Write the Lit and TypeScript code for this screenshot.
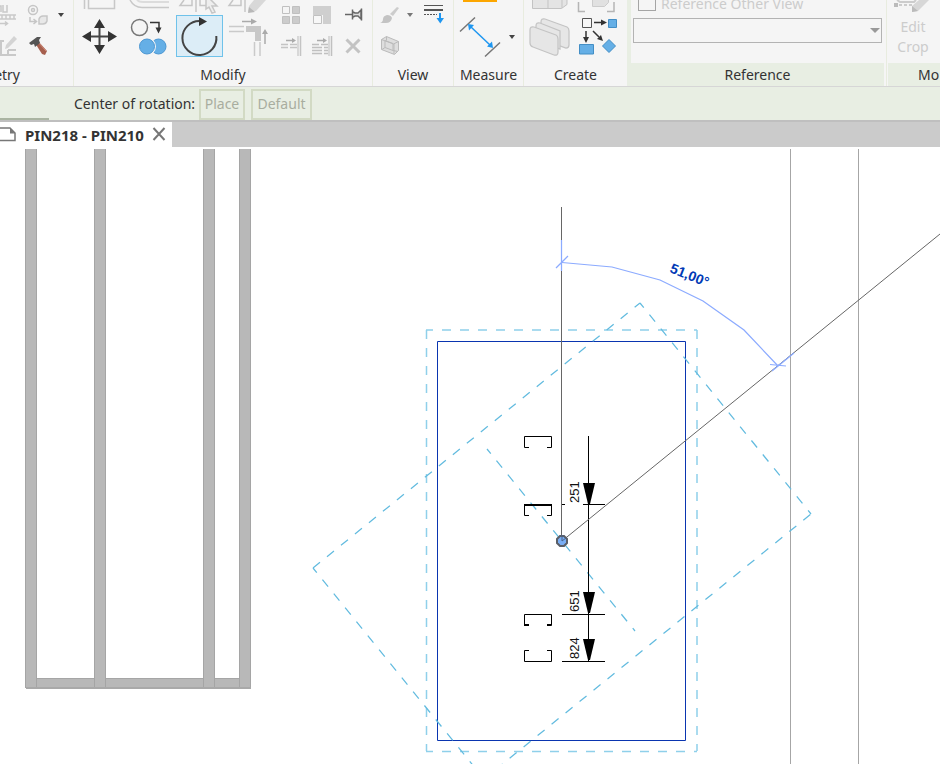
import { LitElement, html, svg, css } from "lit";
import type { SVGTemplateResult } from "lit";
import { customElement } from "lit/decorators.js";

type Box = [number, number, number, number];

const tool = (label: string, box: Box, art: SVGTemplateResult, cls = "") => html`
  <button class="tool ${cls}" aria-label=${label} title=${label}>
    <svg viewBox=${box.join(" ")} width=${box[2]} height=${box[3]} aria-hidden="true">${art}</svg>
  </button>`;

const caret = (x: number, y: number) => svg`<path d="M${x} ${y}h6l-3 4z" fill="#444"/>`;

@customElement("app-root")
export class AppRoot extends LitElement {
  static styles = css`
    :host {
      display: flex;
      flex-direction: column;
      height: 100vh;
      overflow: hidden;
      background: #fff;
      color: #333;
      font: 14px/20px "Noto Sans", sans-serif;
    }
    * { box-sizing: border-box; }
    svg { display: block; }
    .ribbon {
      display: flex;
      flex: none;
      height: 87px;
      overflow: hidden;
      background: #f5f5f5;
      border-bottom: 1px solid #d6d6d6;
    }
    .panel {
      flex: none;
      display: flex;
      flex-direction: column;
      border-right: 1px solid #e8ecdf;
    }
    .body { display: flex; flex: none; height: 63px; overflow: hidden; }
    .title {
      margin: 0;
      height: 23px;
      line-height: 23px;
      text-align: center;
      font-size: 14px;
      font-weight: 400;
      white-space: nowrap;
    }
    .geometry { width: 74px; }
    .geometry .title { width: 20px; direction: rtl; }
    .modify { width: 299px; }
    .view { width: 81px; padding-left: 4px; }
    .view .title { margin-left: -4px; }
    .measure { width: 70px; }
    .create { width: 103px; border-right: 0; }
    .context { border-left: 4px solid #e8eee3; }
    .reference { width: 260px; padding-right: 2px; }
    .reference .body { flex-direction: column; padding: 0 2px; }
    .green { background: #e8eee3; }
    .crop { flex: 1 0 54px; width: 54px; padding-left: 1px; overflow: hidden; border: 0; }
    .crop .title { text-align: left; padding-left: 30px; }
    .grid { display: grid; align-content: start; flex: none; }
    .g-geo { grid-template-columns: 24px 28px 18px; grid-template-rows: 30px 30px; }
    .g-mod { grid-template-columns: 52px 50px 47px 49px; grid-template-rows: 15px 42px; }
    .g-small { grid-template-columns: 32px 32px 32px; grid-template-rows: 30px 30px; padding-left: 3px; }
    .g-view { grid-template-columns: 26px 14px 32px; grid-template-rows: 30px 30px; }
    .g-meas { grid-template-columns: 50px 16px; grid-template-rows: 15px 44px; }
    .g-meas .wide { grid-column: 1 / 3; }
    .g-create { grid-template-columns: 51px 48px; grid-template-rows: 15px 44px; }
    button {
      appearance: none;
      border: 0;
      margin: 0;
      padding: 0;
      background: none;
      color: inherit;
      font: inherit;
    }
    .tool { display: block; overflow: hidden; }
    .active { background: #dcedf7; box-shadow: inset 0 0 0 1px #6fc2ea; }
    .check {
      display: flex;
      flex: none;
      align-items: flex-start;
      gap: 5px;
      margin: -7px 0 0 5px;
      height: 25px;
      color: #ccc;
      white-space: nowrap;
    }
    .check input {
      appearance: none;
      width: 18px;
      height: 18px;
      margin: 0;
      border: 1px solid #a5a5a5;
    }
    .check span { height: 24px; line-height: 22px; }
    .combo { position: relative; flex: none; }
    .combo select {
      appearance: none;
      display: block;
      width: 100%;
      height: 25px;
      border: 1px solid #b3b3b3;
      border-radius: 0;
      background: #f5f5f5;
      opacity: 1;
    }
    .combo svg { position: absolute; right: 2px; top: 10px; pointer-events: none; }
    .edit { display: block; height: 56px; color: #ccc; text-align: center; width: 50px; }
    .edit span { display: block; }
    .options {
      display: flex;
      flex: none;
      align-items: center;
      height: 35px;
      padding-top: 1px;
      background: #e8eee3;
      border-bottom: 2px solid #bfbfbf;
    }
    .field {
      width: 49px;
      height: 32px;
      margin-right: 25px;
      padding: 0;
      border: 0;
      border-bottom: 2px solid #aab4a2;
      border-radius: 0;
      background: none;
    }
    .caption { width: 125px; white-space: nowrap; }
    .choice {
      height: 31px;
      margin-right: 6px;
      border: 2px solid #d2dac4;
      color: #a8ad9f;
      text-align: center;
    }
    .place { width: 46px; }
    .default { width: 61px; }
    .tabs { display: flex; flex: none; height: 25px; background: #cbcbcb; }
    .tab {
      display: flex;
      align-items: center;
      width: 172px;
      background: #fff;
      font-size: 15px;
      font-weight: 700;
      white-space: nowrap;
    }
    .name { width: 126px; padding-left: 7px; font: inherit; color: #333; text-decoration: none; }
    .sheet { flex: 1; min-height: 0; overflow: hidden; }
    .sheet svg { width: 100%; height: 100%; }
    .dim { font: 13px "Liberation Sans", sans-serif; fill: #111; }
    .angle { font: bold 14px "Liberation Sans", sans-serif; fill: #0039b5; }
  `;

  private geometry() {
    return html`<section class="panel geometry">
      <div class="body"><div class="grid g-geo">
        ${tool("Cope", [0, 0, 24, 30], svg`<g fill="none" stroke="#c9c9c9" stroke-width="1.5">
          <path d="M0 6h1v6M3 5v7h4V5M0 15h16M0 19h16M2 15v4M6 15v4M10 15v4M14 15v4"/><path d="M0 23.500h7M5 21.500l2.500 2-2.500 2"/></g>`)}
        ${tool("Join geometry", [24, 0, 28, 30], svg`<g fill="none" stroke="#c6c6c6" stroke-width="1.500">
          <circle cx="33" cy="10" r="4.500"/><circle cx="33" cy="10" r="1.500"/><path d="M30 17v4.500h6M33.500 19l3 2.500-3 2.500"/>
          <path d="M39 24v-5q1-3 4-3h4v5q-1 3-4 3z" fill="#e8e8e8"/></g>`)}
        ${tool("Join options", [52, 0, 18, 30], caret(58, 13))}
        ${tool("Split face", [0, 30, 24, 30], svg`<path d="M5 49l1-4 8-9 3 3-9 9z" fill="#d4d4d4"/><path d="M0 41h4M1 41v14M0 55h16M8 50h8M8 50v5" fill="none" stroke="#c9c9c9" stroke-width="2"/>`)}
        ${tool("Demolish", [24, 30, 28, 30], svg`<path d="M35 43l3-2 9 10-2 4-3-1z" fill="#a65f4e"/><path d="M38 42l8 9" stroke="#d18b79"/><path d="M29 43l8-6h4l-2 3 1 3-5 4-1-3-3 1z" fill="#555"/>`)}
      </div></div>
      <h2 class="title">etry</h2>
    </section>`;
  }

  private modify() {
    return html`<section class="panel modify">
      <div class="body">
        <div class="grid g-mod">
          ${tool("Align", [74, 0, 52, 15], svg`<path d="M84.500 0v9M88.500 0v8.500h26V0" fill="none" stroke="#c8c8c8" stroke-width="1.500"/>`)}
          ${tool("Offset", [126, 0, 50, 15], svg`<path d="M130 0q4 7.500 12 7.500h27" fill="none" stroke="#c8c8c8" stroke-width="1.500"/><path d="M137 0q2 2 6 2h26" fill="none" stroke="#dcdcdc" stroke-width="2"/>`)}
          ${tool("Mirror pick axis", [176, 0, 47, 15], svg`<g fill="none" stroke="#c6c6c6" stroke-width="1.500"><path d="M184 0l-4 5.500h12V0M196 0v12M200 0v5.500h7"/><path d="M206 0v9l3-2 3 6 3-1-3-6h5L209-2" fill="#eee"/></g>`)}
          ${tool("Mirror draw axis", [223, 0, 49, 15], svg`<g fill="none" stroke="#c6c6c6" stroke-width="1.500"><path d="M233 0l-4 5.500h12V0M245 0v12"/></g><path d="M248 12l1-6 5-6h12l-10 11z" fill="#d8d8d8"/><path d="M248 13l1-6 6 5z" fill="#b8b8b8"/>`)}
          ${tool("Move", [74, 15, 52, 42], svg`<path d="M99.500 25v24M88 36.500h23" stroke="#444" stroke-width="2"/><path d="M99.500 19l5.500 9H94zM99.500 54l5.500-9H94zM82 36.500l9-5.500v11zM117 36.500l-9-5.500v11z" fill="#333"/>`)}
          ${tool("Copy", [126, 15, 50, 42], svg`<circle cx="139.500" cy="27.500" r="8" fill="none" stroke="#777" stroke-width="1.500"/><path d="M150 22.500h9v7" fill="none" stroke="#333" stroke-width="1.500"/><path d="M155.500 27.500h6l-3 6z" fill="#333"/><circle cx="158.500" cy="46.500" r="7.500" fill="#65afe6" stroke="#4b96d2"/><circle cx="147" cy="46.500" r="9" fill="#f5f5f5"/><circle cx="147" cy="46.500" r="7.500" fill="#65afe6" stroke="#4b96d2"/>`)}
          ${tool("Rotate", [176, 15, 47, 42], svg`<path d="M200 21a17 17 0 1 0 16.300 15" fill="none" stroke="#444" stroke-width="2"/><path d="M199 17l8 4.500-8 4.500z" fill="#333"/>`, "active")}
          ${tool("Trim and extend to corner", [223, 15, 49, 42], svg`<g fill="none" stroke="#cacaca" stroke-width="1.500"><path d="M229 26.500h15M229 31.500h15M254.500 42v14M260 42v14"/></g><path d="M246 26h15v15h-6v-9h-9z" fill="#c8c8c8"/><path d="M242 21.500h10M265 44V32" stroke="#aaa" stroke-width="1.500"/><path d="M251 18.500l6 3-6 3zM262 34l3-5 3 5z" fill="#aaa"/>`)}
        </div>
        <div class="grid g-small">
          ${tool("Array", [275, 0, 32, 30], svg`<g fill="#ccc" stroke="#c0c0c0"><path d="M292.500 6.500h7v7h-7zM282.500 16.500h7v7h-7zM292.500 16.500h7v7h-7z"/><path d="M282.500 6.500h7v7h-7z" fill="#f5f5f5"/></g>`)}
          ${tool("Scale", [307, 0, 32, 30], svg`<path d="M313 6h18v18h-8v-9h-10z" fill="#cfcfcf"/><path d="M313.500 15.500h8v8h-8z" fill="#f7f7f7" stroke="#c0c0c0"/>`)}
          ${tool("Pin", [339, 0, 32, 30], svg`<path d="M345 14.500h7" stroke="#666" stroke-width="1.500"/><path d="M352.500 9.500v10M353 12l2 1h3l3-3v9l-3-3h-3l-2 1M361.500 8.500v12" fill="#ddd" stroke="#666" stroke-width="1.500"/>`)}
          ${tool("Trim single element", [275, 30, 32, 30], svg`<path d="M281 44.500h7M281 47.500h7M290 44.500h7M290 47.500h7M300.500 36v20" stroke="#c4c4c4" stroke-width="1.500"/><path d="M298 36v20" stroke="#d8d8d8" stroke-width="2"/><path d="M286 40.500h7" stroke="#aaa" stroke-width="1.500"/><path d="M292 38l4 2.500-4 2.500z" fill="#aaa"/>`)}
          ${tool("Trim multiple elements", [307, 30, 32, 30], svg`<path d="M312 44.500h7M312 47.500h10M312 50.500h10M312 53.500h10M321 44.500h7M324 47.500h4M324 50.500h4M324 53.500h4M331.500 36v20" stroke="#c0c0c0" stroke-width="1.500"/><path d="M329 36v20" stroke="#d8d8d8" stroke-width="2"/><path d="M317 40.500h7" stroke="#aaa" stroke-width="1.500"/><path d="M323 38l4 2.500-4 2.500z" fill="#aaa"/>`)}
          ${tool("Delete", [339, 30, 32, 30], svg`<path d="M346.500 39.500l13 13M359.500 39.500l-13 13" stroke="#c3c3c3" stroke-width="3"/>`)}
        </div>
      </div>
      <h2 class="title">Modify</h2>
    </section>`;
  }

  private view() {
    return html`<section class="panel view">
      <div class="body"><div class="grid g-view">
        ${tool("Override graphics", [377, 0, 26, 30], svg`<path d="M390 14l7-7 2 1-6 8z" fill="#ccc"/><path d="M380 23q3-1 3-4t4-4q4 0 5 3-1 5-6 5z" fill="#c3c3c3"/>`)}
        ${tool("Override options", [403, 0, 14, 30], svg`<path d="M407 13h6l-3 4z" fill="#777"/>`)}
        ${tool("Thin lines", [417, 0, 32, 30], svg`<path d="M424 5.500h19" stroke="#555"/><path d="M424 10h19" stroke="#555" stroke-width="2"/><path d="M424 14.500h13" stroke="#555" stroke-dasharray="2 1"/><path d="M440 13v6" stroke="#1e96f0" stroke-width="2"/><path d="M436.500 18h7.500l-3.750 5.500z" fill="#1e96f0"/>`)}
        ${tool("Section box", [377, 30, 26, 30], svg`<g fill="#dedede" stroke="#bbb"><path d="M381.500 39.500l5-3 12 5v9l-4 4-13-5z"/><path d="M385 40.500l8 3v7l-8-3zM381.500 39.500l12 4.500 5-2.500M394 44v10M386.500 36.500v4M385 47.500l-3 2M393 50.500l5 1" fill="none"/></g>`)}
      </div></div>
      <h2 class="title">View</h2>
    </section>`;
  }

  private measure() {
    return html`<section class="panel measure">
      <div class="body"><div class="grid g-meas">
        ${tool("Measure", [454, 0, 66, 15], svg`<path d="M463 0h34v2h-34z" fill="#fca600"/>`, "wide")}
        ${tool("Aligned dimension", [454, 15, 50, 44], svg`<path d="M460 31.500l15-14M485 56.500l15-14" stroke="#777" stroke-width="1.500"/><path d="M471 27l19 18" stroke="#1e96f0" stroke-width="1.500"/><path d="M468 24l6 1-5 5.500zM493 48l-6-1.500 5-5z" fill="#1e96f0"/>`)}
        ${tool("Dimension options", [504, 15, 16, 44], caret(509, 35))}
      </div></div>
      <h2 class="title">Measure</h2>
    </section>`;
  }

  private create() {
    return html`<section class="panel create">
      <div class="body"><div class="grid g-create">
        ${tool("Create assembly", [524, 0, 51, 15], svg`<path d="M532.500 0v8.500h29l5.500-4V0M548 0v8.500M562 0v8" fill="#e4e4e4" stroke="#c3c3c3"/>`)}
        ${tool("Create parts", [575, 0, 48, 15], svg`<path d="M585 11.500h-6.500V2M607 11.500h7V2" fill="none" stroke="#b5b5b5" stroke-width="1.500"/><path d="M592.500 0v6.500h12l4-4V0" fill="#e1e1e1" stroke="#ccc"/>`)}
        ${tool("Create group", [524, 15, 51, 44], svg`<g fill="#e6e6e6" stroke="#c4c4c4" stroke-width="1.250"><path d="M541 22q0-4 4-3l22 8q2 1 2 4v14q0 3-3 3l-25-9z"/><path d="M536 26q0-4 4-3l20 8v18l-24-9z"/><path d="M530 30q0-4 4-3l22 8q2 1 2 4v13q0 4-4 3l-21-8q-3-1-3-4z"/></g>`)}
        ${tool("Create similar", [575, 15, 48, 44], svg`<path d="M582.500 18.500h9v9h-9z" fill="#f7f7f7" stroke="#555"/><path d="M608.500 19.500h8v8h-8zM579.500 44.500h14v9.500h-14zM609 39.500l6.500 6.500-6.500 6.500-6.500-6.500z" fill="#65afe6" stroke="#438ec5"/><path d="M594 22.500h8M586 31v7M593 31l6 6" stroke="#333" stroke-width="1.500"/><path d="M601 19.500l6 3-6 3zM583 37h6l-3 6zM603 41l-6-2 4-4z" fill="#333"/>`)}
      </div></div>
      <h2 class="title">Create</h2>
    </section>`;
  }

  private reference() {
    return html`<section class="panel context reference">
      <div class="body">
        <label class="check"><input type="checkbox" disabled /><span>Reference Other View</span></label>
        <div class="combo">
          <select aria-label="Referenced view" disabled></select>
          <svg width="10" height="5" viewBox="0 0 10 5" aria-hidden="true"><path d="M0 0h10L5 5z" fill="#999"/></svg>
        </div>
      </div>
      <h2 class="title green">Reference</h2>
    </section>
    <section class="panel crop">
      <div class="body">
        <button class="edit" disabled>
          <svg viewBox="888 0 50 17" width="50" height="17" aria-hidden="true"><path d="M894 3h4v4h-4z" fill="#bbb"/><path d="M899 5h16" stroke="#ccc" stroke-width="2" stroke-dasharray="3 2"/><path d="M897 0l3 2h14l2-2" fill="none" stroke="#ccc" stroke-width="2"/><path d="M912 12v-6l7-6h10l-11 11z" fill="#d7d7d7"/><path d="M912 12v-6l6 5z" fill="#bbb"/></svg>
          <span>Edit</span><span>Crop</span>
        </button>
      </div>
      <h2 class="title green">Mo</h2>
    </section>`;
  }

  private drawing() {
    const walls = [25, 94, 203, 239];
    const arrows = [483, 592, 639];
    const dims: [string, number][] = [["251", 503], ["651", 612], ["824", 659]];
    return svg`
      <g fill="#b8b8b8">
        <path d="M26 678h225v11H26z"/>
        <path d="M26 678.500h225" stroke="#a5a5a5"/>
        ${walls.map((x) => svg`<path d="M${x} 149h12v539h-12z"/><path d="M${x + 0.5} 149v539M${x + 11.5} 149v539" stroke="#a5a5a5"/>`)}
        <path d="M26 688h225" stroke="#a9a9a9" stroke-width="2"/>
      </g>
      <path d="M790.500 149v620M858.500 149v620" stroke="#a6a6a6"/>
      <path d="M437.500 341.500h248v399h-248z" fill="none" stroke="#0a35b0"/>
      <g fill="none" stroke="#8fd0ea" stroke-width="1.500" stroke-dasharray="9 9">
        <path d="M426 330h271M426 751.500h271" stroke-dashoffset="2"/>
        <path d="M426.500 330v421M697 330v421"/>
      </g>
      <g fill="none" stroke="#62bbdf" stroke-width="1.250" stroke-dasharray="9 9">
        <path d="M313 568l327-265"/>
        <path d="M313 568l171 211M640 303l171 211" stroke-dashoffset="3"/>
        <path d="M484 779l327-265M487 449l148 182" stroke-dashoffset="3"/>
      </g>
      <g fill="none" stroke="#000">
        <path d="M529 447.500h-4.500v-11h27v11H547"/>
        <path d="M529 515.500h-4.500v-11h27v11H547"/>
        <path d="M524 505h28" stroke-width="2"/>
        <path d="M529 625.500h-4.500v-11h27v11H547"/>
        <path d="M524 625h5M547 625h4" stroke-width="2"/>
        <path d="M529 650.500h-4.500v11h27v-11H547"/>
        <path d="M588.500 436v226M562 504.500h3M583 504.500h22M562 614.500h43M562 661.500h43"/>
      </g>
      ${arrows.map((y) => svg`<path d="M583 ${y}h12l-5 21h-2z" fill="#000"/>`)}
      ${dims.map(([t, y]) => svg`<text class="dim" transform="translate(579 ${y}) rotate(-90)">${t}</text>`)}
      <path d="M561.500 207v334M562 541l378-307" fill="none" stroke="#666"/>
      <path d="M560 536h4l3 3v4l-3 3h-4l-3-3v-4z" fill="#79aef5" stroke="#5a5f68" stroke-width="2"/>
      <path d="M562 535v6l4-3" fill="none" stroke="#48628a"/>
      <g fill="none" stroke="#8cabff" stroke-width="1.250">
        <path d="M562 262.500l50 4.500 48 13 43 21 41 29 34 36"/>
        <path d="M561.500 240v31M556 268l12-12M770 364.500l16 1.500M772 371l22-18"/>
      </g>
      <text class="angle" transform="translate(669 272) rotate(22)">51,00°</text>`;
  }

  render() {
    return html`
      <header class="ribbon">
        ${this.geometry()} ${this.modify()} ${this.view()} ${this.measure()} ${this.create()} ${this.reference()}
      </header>
      <div class="options">
        <input class="field" type="text" aria-label="Angle" />
        <span class="caption">Center of rotation:</span>
        <button class="choice place" disabled>Place</button>
        <button class="choice default" disabled>Default</button>
      </div>
      <nav class="tabs">
        <div class="tab">
          <svg width="18" height="25" viewBox="0 122 18 25" aria-hidden="true"><path d="M0 128h10l5 5v7.500H0" fill="#fff" stroke="#777" stroke-width="1.500"/><path d="M10 128v5.500h5z" fill="#777"/></svg>
          <a class="name" href="#">PIN218 - PIN210</a>
          ${tool("Close view", [144, 122, 28, 25], svg`<path d="M153.500 128l11 12M164.500 128l-11 12" stroke="#777" stroke-width="2"/>`)}
        </div>
      </nav>
      <main class="sheet">
        <svg viewBox="0 147 940 617" preserveAspectRatio="xMinYMin slice" role="img" aria-label="Plan view">${this.drawing()}</svg>
      </main>`;
  }
}
